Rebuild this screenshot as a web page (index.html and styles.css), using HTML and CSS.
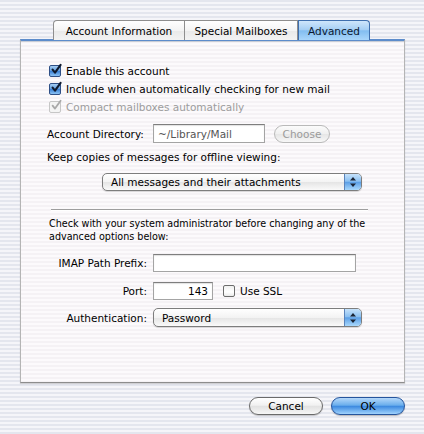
FILE: index.html
```html
<!DOCTYPE html>
<html>
<head>
<meta charset="utf-8">
<link rel="stylesheet" href="styles.css">
</head>
<body>
<div class="window">
  <div class="tabs">
    <div class="tab tab-1">Account Information</div>
    <div class="tab tab-2">Special Mailboxes</div>
    <div class="tab tab-3 selected">Advanced</div>
  </div>
  <div class="panel">
    <div class="check-row first">
      <span class="cb checked"><svg viewBox="0 0 12 12" width="12" height="12"><path d="M2.6 5.6 L5 8.6 L10.6 0.8" fill="none" stroke="#0f1a2e" stroke-width="2.1" stroke-linecap="round" stroke-linejoin="round"/></svg></span>
      <span>Enable this account</span>
    </div>
    <div class="check-row">
      <span class="cb checked"><svg viewBox="0 0 12 12" width="12" height="12"><path d="M2.6 5.6 L5 8.6 L10.6 0.8" fill="none" stroke="#0f1a2e" stroke-width="2.1" stroke-linecap="round" stroke-linejoin="round"/></svg></span>
      <span>Include when automatically checking for new mail</span>
    </div>
    <div class="check-row disabled">
      <span class="cb dim"><svg viewBox="0 0 12 12" width="12" height="12"><path d="M2.6 5.6 L5 8.6 L10.6 0.8" fill="none" stroke="#a9a9a9" stroke-width="1.8" stroke-linecap="round" stroke-linejoin="round"/></svg></span>
      <span>Compact mailboxes automatically</span>
    </div>

    <div class="dir-row">
      <span class="dir-label">Account Directory:</span>
      <span class="field dir-field">~/Library/Mail</span>
      <span class="choose">Choose</span>
    </div>

    <div class="keep">Keep copies of messages for offline viewing:</div>

    <div class="popup keep-popup">
      <span class="popup-text">All messages and their attachments</span>
      <span class="popup-arrows"><svg viewBox="0 0 8 12" width="8" height="12"><path d="M4 1 L7 4.6 L1 4.6 Z M4 11 L7 7.4 L1 7.4 Z" fill="#1b2536"/></svg></span>
    </div>

    <div class="sep"></div>

    <p class="note">Check with your system administrator before changing any of the advanced options below:</p>

    <div class="form-row imap-row">
      <span class="form-label">IMAP Path Prefix:</span>
      <span class="field imap-field"></span>
    </div>
    <div class="form-row port-row">
      <span class="form-label">Port:</span>
      <span class="field port-field">143</span>
      <span class="cb empty"></span>
      <span class="ssl">Use SSL</span>
    </div>
    <div class="form-row auth-row">
      <span class="form-label">Authentication:</span>
      <div class="popup auth-popup">
        <span class="popup-text">Password</span>
        <span class="popup-arrows"><svg viewBox="0 0 8 12" width="8" height="12"><path d="M4 1 L7 4.6 L1 4.6 Z M4 11 L7 7.4 L1 7.4 Z" fill="#1b2536"/></svg></span>
      </div>
    </div>
  </div>
  <div class="buttons">
    <span class="btn cancel">Cancel</span>
    <span class="btn ok">OK</span>
  </div>
</div>
</body>
</html>
```
FILE: styles.css
```css
html, body {
  margin: 0;
  padding: 0;
}
body {
  width: 424px;
  height: 434px;
  overflow: hidden;
  font-family: "DejaVu Sans", "Lucida Grande", sans-serif;
  font-size: 10.5px;
  color: #000;
  background: repeating-linear-gradient(180deg, #e4e6ee 0px, #e4e6ee 2px, #f5f5f9 2px, #f5f5f9 4px);
}
.window {
  padding: 20px 19px 0 20px;
}
.tabs {
  display: flex;
  margin-left: 33px;
  height: 20px;
  position: relative;
  z-index: 2;
}
.tab {
  box-sizing: border-box;
  height: 20px;
  display: flex;
  align-items: center;
  justify-content: center;
  font-size: 10.5px;
  color: #000;
  border: 1px solid #8e8e8e;
  border-bottom: none;
  background: linear-gradient(180deg, #ffffff 0%, #f4f4f4 50%, #e9e9e9 51%, #f3f3f3 100%);
}
.tab-1 {
  width: 132px;
  border-radius: 4px 0 0 0;
}
.tab-2 {
  width: 113px;
  border-left: none;
}
.tab-3 {
  width: 72px;
  border-radius: 0 4px 0 0;
}
.tab.selected {
  border-color: #3f6fae;
  border-left: 1px solid #3f6fae;
  background: linear-gradient(180deg, #cfe6fb 0%, #a6cff4 45%, #82bdf0 52%, #a9d6fb 100%);
  color: #0c1830;
}
.panel {
  box-sizing: border-box;
  margin-top: -1px;
  width: 385px;
  height: 344px;
  border-top: 2px solid #5d8ccb;
  border-left: 1px solid #b4b4b4;
  border-right: 1px solid #b4b4b4;
  border-bottom: 1px solid #8d8d8d;
  box-shadow: 0 1px 1px rgba(0,0,0,0.15), inset 0 1px 0 #c9cdd6;
  background: repeating-linear-gradient(180deg, #f5f2f5 0px, #f5f2f5 2px, #fcfafc 2px, #fcfafc 4px);
  padding-left: 26px;
  position: relative;
  z-index: 1;
}
.check-row {
  display: flex;
  align-items: center;
  height: 18px;
  padding-left: 2px;
}
.check-row.first {
  margin-top: 21px;
}
.check-row .cb {
  margin-right: 5px;
}
.check-row.disabled {
  color: #9d9d9d;
}
.cb {
  box-sizing: border-box;
  width: 12px;
  height: 12px;
  border: 1px solid #6c6c6c;
  border-radius: 2px;
  background: linear-gradient(180deg, #f0f0f0 0%, #ffffff 60%, #eaeaea 100%);
  position: relative;
  display: inline-block;
  flex: none;
}
.cb.checked {
  border-color: #2e4f86;
  background: linear-gradient(180deg, #a6cdf2 0%, #5f9de0 50%, #3c82d6 55%, #8cc3f5 100%);
}
.cb.dim {
  border-color: #c6c6c6;
  background: #f4f4f4;
}
.cb svg {
  position: absolute;
  left: 0px;
  top: -2px;
  overflow: visible;
}
.dir-row {
  display: flex;
  align-items: center;
  margin-top: 8px;
  height: 19px;
}
.dir-label {
  width: 106px;
}
.field {
  box-sizing: border-box;
  height: 19px;
  background: #fff;
  border: 1px solid #a4a4a4;
  border-top-color: #7e7e7e;
  box-shadow: inset 0 1px 1px rgba(0,0,0,0.12);
  display: flex;
  align-items: center;
  padding: 0 4px;
}
.dir-field {
  width: 112px;
  color: #555;
}
.choose {
  box-sizing: border-box;
  margin-left: 9px;
  width: 56px;
  height: 18px;
  border: 1px solid #b9b9b9;
  border-radius: 9px;
  background: linear-gradient(180deg, #fbfbfb 0%, #efefef 50%, #e6e6e6 52%, #f7f7f7 100%);
  color: #9b9b9b;
  display: flex;
  align-items: center;
  justify-content: center;
}
.keep {
  margin-top: 7px;
  height: 14px;
  line-height: 14px;
}
.popup {
  box-sizing: border-box;
  display: flex;
  align-items: center;
  height: 18px;
  border: 1px solid #7d7d7d;
  border-radius: 5px;
  background: linear-gradient(180deg, #ffffff 0%, #f3f3f3 50%, #e5e5e5 52%, #fafafa 100%);
  box-shadow: 0 1px 1px rgba(0,0,0,0.15);
  overflow: hidden;
}
.popup-text {
  flex: 1;
  padding-left: 8px;
}
.popup-arrows {
  width: 16px;
  height: 100%;
  display: flex;
  align-items: center;
  justify-content: center;
  border-left: 1px solid #5b84bb;
  background: linear-gradient(180deg, #c6e2fb 0%, #8bc0f1 45%, #5c9fe6 52%, #a9d8fc 100%);
}
.keep-popup {
  margin-top: 9px;
  margin-left: 55px;
  width: 260px;
}
.sep {
  margin-top: 18px;
  margin-left: 4px;
  width: 317px;
  height: 1px;
  background: #9e9e9e;
  box-shadow: 0 1px 0 #ffffff;
}
.note {
  margin: 8px 0 0 2px;
  font-size: 9.6px;
  line-height: 12.5px;
  width: 330px;
}
.form-row {
  display: flex;
  align-items: center;
}
.form-label {
  width: 100px;
  text-align: right;
  margin-right: 6px;
}
.imap-row {
  margin-top: 11px;
  height: 18px;
}
.imap-field {
  width: 203px;
  height: 18px;
}
.port-row {
  margin-top: 10px;
  height: 18px;
}
.port-field {
  width: 60px;
  height: 18px;
  justify-content: flex-end;
}
.port-row .cb {
  margin-left: 10px;
  margin-right: 5px;
}
.auth-row {
  margin-top: 8px;
  height: 19px;
}
.auth-popup {
  width: 209px;
  height: 19px;
}
.buttons {
  display: flex;
  justify-content: flex-end;
  gap: 8px;
  margin-top: 14px;
  width: 385px;
}
.btn {
  box-sizing: border-box;
  width: 74px;
  height: 18px;
  border-radius: 9px;
  display: flex;
  align-items: center;
  justify-content: center;
  font-size: 10.5px;
}
.cancel {
  border: 1px solid #6a6a6a;
  background: linear-gradient(180deg, #ffffff 0%, #f1f1f1 45%, #e2e2e2 52%, #f6f6f6 100%);
  box-shadow: 0 1px 1px rgba(0,0,0,0.2);
}
.ok {
  border: 1px solid #24549d;
  background: linear-gradient(180deg, #b5d8fa 0%, #6aaeec 45%, #3d8ae0 52%, #9fd2fd 100%);
  box-shadow: 0 1px 1px rgba(0,0,0,0.25);
}
```
